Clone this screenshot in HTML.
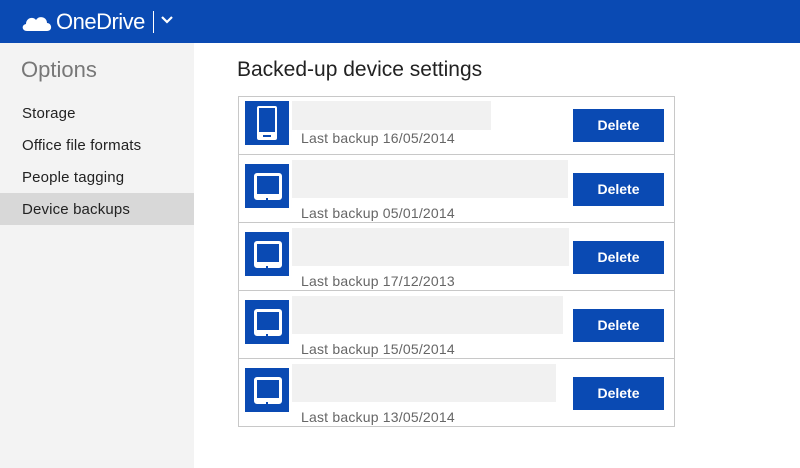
<!DOCTYPE html>
<html><head><style>
body{margin:0;width:800px;height:468px;overflow:hidden;background:#fff;font-family:"Segoe UI","Liberation Sans",sans-serif;position:relative}
.hdr{position:absolute;left:0;top:0;width:800px;height:43px;background:#0a4ab3}
.side{position:absolute;left:0;top:43px;width:194px;height:425px;background:#f3f3f3}
.abs{position:absolute}
.nav{position:absolute;left:22px;font-size:15px;color:#222;letter-spacing:0.15px}
.box{position:absolute;left:238px;width:437px;border:1px solid #c8c8c8;box-sizing:border-box;background:#fff}
.ico{position:absolute;left:245px;width:44px;height:44px;background:#0a4ab3}
.ph{position:absolute;left:292px;background:#f1f1f1}
.lb{position:absolute;left:301px;font-size:14px;color:#666;letter-spacing:0.2px}
.btn{position:absolute;left:573px;width:91px;height:33px;background:#0a4ab3;color:#fff;font-size:14px;font-weight:bold;text-align:center;line-height:33px}
</style></head><body>
<div class="hdr">
<svg class="abs" style="left:21px;top:12px" width="32" height="20" viewBox="0 0 32 20"><path d="M6 19 C1 19 0 13 5 12 C5 6 12 4 15 8 C18 3 26 5 26 11 C31 11 32 19 26 19 Z" fill="#fff"/></svg>
<div class="abs" style="left:56px;top:9px;font-size:22px;color:#fff;letter-spacing:-0.5px">OneDrive</div>
<div class="abs" style="left:153px;top:11px;width:1px;height:22px;background:#fff"></div>
<svg class="abs" style="left:161px;top:16px" width="12" height="8" viewBox="0 0 12 8"><path d="M1 1 L6 6 L11 1" stroke="#fff" stroke-width="2.2" fill="none"/></svg>
</div>
<div class="side"></div>
<div class="abs" style="left:0;top:193px;width:194px;height:32px;background:#d8d8d8"></div>
<div class="abs" style="left:21px;top:57px;font-size:22px;color:#777">Options</div>
<div class="nav" style="top:105px">Storage</div>
<div class="nav" style="top:137px">Office file formats</div>
<div class="nav" style="top:169px">People tagging</div>
<div class="nav" style="top:201px">Device backups</div>
<div class="abs" style="left:237px;top:58px;font-size:21px;color:#222">Backed-up device settings</div>

<div class="box" style="top:96px;height:331px"></div>
<div class="abs" style="left:239px;top:154px;width:435px;height:1px;background:#c8c8c8"></div>
<div class="abs" style="left:239px;top:222px;width:435px;height:1px;background:#c8c8c8"></div>
<div class="abs" style="left:239px;top:290px;width:435px;height:1px;background:#c8c8c8"></div>
<div class="abs" style="left:239px;top:358px;width:435px;height:1px;background:#c8c8c8"></div>

<div class="ico" style="top:101px"><div class="abs" style="left:12px;top:5px;width:16px;height:30px;border:2px solid #fff;border-radius:2px;background:#0a4ab3;box-shadow:inset 0 -6px 0 #fff"></div><div class="abs" style="left:18px;top:34px;width:8px;height:2px;background:#0a4ab3"></div></div>
<div class="ph" style="top:101px;width:199px;height:29px"></div>
<div class="lb" style="top:130px">Last backup 16/05/2014</div>
<div class="btn" style="top:109px">Delete</div>

<div class="ico" style="top:164px"><div class="abs" style="left:9px;top:9px;width:22px;height:18px;border:3px solid #fff;border-bottom-width:6px;border-radius:3px"></div><div class="abs" style="left:21px;top:34px;width:2px;height:2px;background:#0a4ab3"></div></div>
<div class="ph" style="top:160px;width:276px;height:38px"></div>
<div class="lb" style="top:205px">Last backup 05/01/2014</div>
<div class="btn" style="top:173px">Delete</div>

<div class="ico" style="top:232px"><div class="abs" style="left:9px;top:9px;width:22px;height:18px;border:3px solid #fff;border-bottom-width:6px;border-radius:3px"></div><div class="abs" style="left:21px;top:34px;width:2px;height:2px;background:#0a4ab3"></div></div>
<div class="ph" style="top:228px;width:277px;height:38px"></div>
<div class="lb" style="top:273px">Last backup 17/12/2013</div>
<div class="btn" style="top:241px">Delete</div>

<div class="ico" style="top:300px"><div class="abs" style="left:9px;top:9px;width:22px;height:18px;border:3px solid #fff;border-bottom-width:6px;border-radius:3px"></div><div class="abs" style="left:21px;top:34px;width:2px;height:2px;background:#0a4ab3"></div></div>
<div class="ph" style="top:296px;width:271px;height:38px"></div>
<div class="lb" style="top:341px">Last backup 15/05/2014</div>
<div class="btn" style="top:309px">Delete</div>

<div class="ico" style="top:368px"><div class="abs" style="left:9px;top:9px;width:22px;height:18px;border:3px solid #fff;border-bottom-width:6px;border-radius:3px"></div><div class="abs" style="left:21px;top:34px;width:2px;height:2px;background:#0a4ab3"></div></div>
<div class="ph" style="top:364px;width:264px;height:38px"></div>
<div class="lb" style="top:409px">Last backup 13/05/2014</div>
<div class="btn" style="top:377px">Delete</div>
</body></html>
